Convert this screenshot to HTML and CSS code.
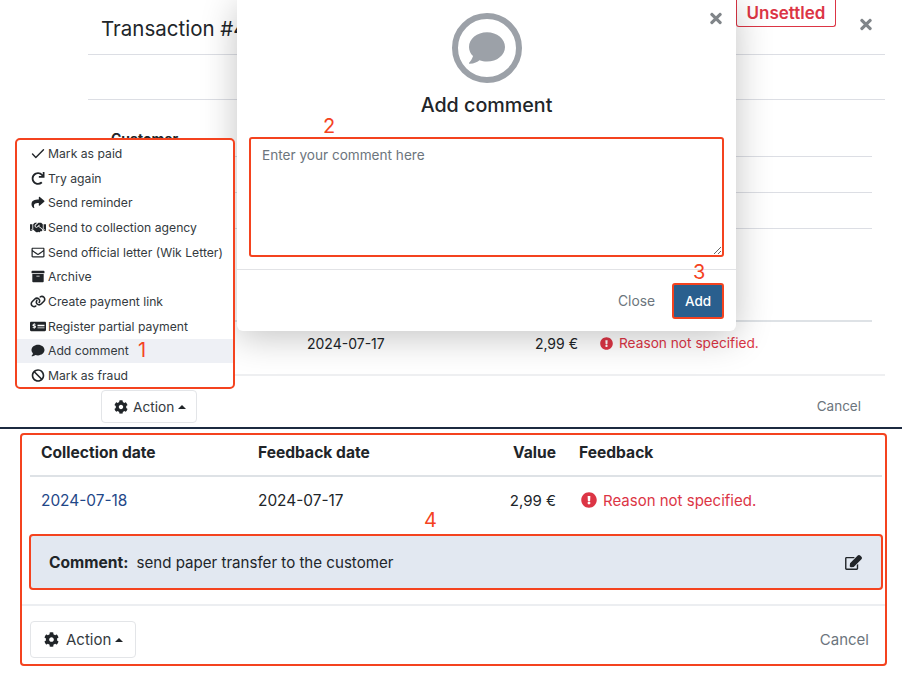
FILE: index.html
```html
<!DOCTYPE html>
<html lang="en">
<head>
<meta charset="utf-8">
<title>Add comment</title>
<link rel="stylesheet" href="styles.css">
</head>
<body>
<svg class="defs" width="0" height="0" aria-hidden="true">
  <symbol id="i-check" viewBox="0 0 512 512"><path fill="none" stroke="currentColor" stroke-width="56" stroke-linecap="round" stroke-linejoin="round" d="M40 280l130 130L472 108"/></symbol>
  <symbol id="i-redo" viewBox="0 0 512 512"><path d="M500.33 0h-47.41a12 12 0 0 0-12 12.57l4 82.76A247.42 247.42 0 0 0 256 8C119.34 8 8.05 119.53 8 256.19 7.95 393.07 119 504 256 504a247.1 247.1 0 0 0 166.18-63.91 12 12 0 0 0 .48-17.43l-34-34a12 12 0 0 0-16.38-.55A176 176 0 1 1 402.1 157.8l-101.53-4.87a12 12 0 0 0-12.57 12v47.41a12 12 0 0 0 12 12h200.33a12 12 0 0 0 12-12V12a12 12 0 0 0-12-12z"/></symbol>
  <symbol id="i-share" viewBox="0 0 512 512"><path d="M503.691 189.836L327.687 37.851C312.281 24.546 288 35.347 288 56.015v80.053C127.371 137.907 0 170.1 0 322.326c0 61.441 39.581 122.309 83.333 154.132 13.653 9.931 33.111-2.533 28.077-18.631C66.066 312.814 132.917 274.316 288 272.085V360c0 20.7 24.3 31.453 39.687 18.164l176.004-152c11.071-9.562 11.086-26.753 0-36.328z"/></symbol>
  <symbol id="i-handshake" viewBox="0 0 640 512"><path d="M434.7 64h-85.9c-8 0-15.7 3-21.6 8.4l-98.3 90c-.1.1-.2.3-.3.4-16.6 15.6-16.3 40.5-2.1 56 12.7 13.9 39.4 17.6 56.1 2.7.1-.1.3-.1.4-.2l79.9-73.2c6.5-5.9 16.7-5.5 22.6 1 6 6.5 5.5 16.6-1 22.6l-26.1 23.9L504 313.8c2.9 2.4 5.5 5 7.9 7.7V128l-54.6-54.6c-5.9-6-14.1-9.4-22.6-9.4zM544 128.2v223.9c0 17.7 14.3 32 32 32h64V128.2h-96zm48 223.9c-8.8 0-16-7.2-16-16s7.2-16 16-16 16 7.2 16 16-7.2 16-16 16zM0 384h64c17.7 0 32-14.3 32-32V128.2H0V384zm48-63.9c8.8 0 16 7.2 16 16s-7.2 16-16 16-16-7.2-16-16c0-8.9 7.2-16 16-16zm435.9 18.6L334.6 217.5l-30 27.5c-29.7 27.1-75.2 24.5-101.7-4.4-26.9-29.4-24.8-74.9 4.4-101.7L289.1 64h-83.8c-8.5 0-16.6 3.4-22.6 9.4L128 128v223.9h18.3l90.5 81.9c27.4 22.3 67.7 18.1 90-9.3l.2-.2 17.9 15.5c15.9 13 39.4 10.5 52.3-5.4l31.4-38.6 5.4 4.4c13.7 11.1 33.9 9.1 45-4.7l9.5-11.7c11.2-13.8 9.1-33.9-4.6-45.1z"/></symbol>
  <symbol id="i-envelope" viewBox="0 0 512 512"><path d="M464 64H48C21.49 64 0 85.49 0 112v288c0 26.51 21.49 48 48 48h416c26.51 0 48-21.49 48-48V112c0-26.51-21.49-48-48-48zm0 48v40.805c-22.422 18.259-58.168 46.651-134.587 106.49-16.841 13.247-50.201 45.072-73.413 44.701-23.208.375-56.579-31.459-73.413-44.701C106.18 199.465 70.425 171.067 48 152.805V112h416zM48 400V214.398c22.914 18.251 55.409 43.862 104.938 82.646 21.857 17.205 60.134 55.186 103.062 54.955 42.717.231 80.509-37.199 103.053-54.947 49.528-38.783 82.032-64.401 104.947-82.653V400H48z"/></symbol>
  <symbol id="i-archive" viewBox="0 0 512 512"><path d="M32 448c0 17.7 14.3 32 32 32h384c17.7 0 32-14.3 32-32V160H32v288zm160-212c0-6.6 5.4-12 12-12h104c6.6 0 12 5.4 12 12v8c0 6.6-5.4 12-12 12H204c-6.6 0-12-5.4-12-12v-8zM480 32H32C14.3 32 0 46.3 0 64v48c0 8.8 7.2 16 16 16h480c8.8 0 16-7.2 16-16V64c0-17.7-14.3-32-32-32z"/></symbol>
  <symbol id="i-link" viewBox="0 0 640 512"><path d="M579.8 267.7c56.5-56.5 56.5-148 0-204.5c-50-50-128.8-56.5-186.3-15.4l-1.6 1.1c-14.4 10.3-17.7 30.3-7.4 44.6s30.3 17.7 44.6 7.4l1.6-1.1c32.1-22.9 76-19.3 103.8 8.6c31.5 31.5 31.5 82.5 0 114L422.3 334.8c-31.5 31.5-82.5 31.5-114 0c-27.9-27.9-31.5-71.8-8.6-103.8l1.1-1.6c10.3-14.4 6.9-34.4-7.4-44.6s-34.4-6.9-44.6 7.4l-1.1 1.6C206.5 251.2 213 330 263 380c56.5 56.5 148 56.5 204.5 0L579.8 267.7zM60.2 244.3c-56.5 56.5-56.5 148 0 204.5c50 50 128.8 56.5 186.3 15.4l1.6-1.1c14.4-10.3 17.7-30.3 7.4-44.6s-30.3-17.7-44.6-7.4l-1.6 1.1c-32.1 22.9-76 19.3-103.8-8.6C74 372 74 321 105.5 289.5L217.7 177.2c31.5-31.5 82.5-31.5 114 0c27.9 27.9 31.5 71.8 8.6 103.9l-1.1 1.6c-10.3 14.4-6.9 34.4 7.4 44.6s34.4 6.9 44.6-7.4l1.1-1.6C433.5 260.8 427 182 377 132c-56.5-56.5-148-56.5-204.5 0L60.2 244.3z"/></symbol>
  <symbol id="i-money" viewBox="0 0 640 512"><path fill-rule="evenodd" d="M48 64h544c26.5 0 48 21.500 48 48v288c0 26.500-21.500 48-48 48H48c-26.500 0-48-21.500-48-48V112c0-26.500 21.500-48 48-48zM300 192v48c0 4 4 8 8 8h264c4 0 8-4 8-8v-48c0-4-4-8-8-8H308c-4 0-8 4-8 8zm0 112v16c0 4 4 8 8 8h264c4 0 8-4 8-8v-16c0-4-4-8-8-8H308c-4 0-8 4-8 8zM150 130v22c-30 4-52 26-52 52 0 28 20 42 50 50 22 6 30 10 30 18 0 8-8 12-22 12-12 0-28-4-40-10l-14 34c12 6 30 10 48 12v22h36v-24c30-6 50-26 50-54 0-30-20-44-52-54-20-6-28-10-28-16s6-10 18-10 26 4 34 8l14-34c-10-4-24-8-36-8v-20z"/></symbol>
  <symbol id="i-comment" viewBox="0 0 512 512"><path d="M256 32C114.6 32 0 125.1 0 240c0 49.6 21.4 95 57 130.7C44.5 421.1 2.7 466 2.2 466.5c-2.2 2.3-2.8 5.7-1.5 8.7S4.8 480 8 480c66.3 0 116-31.8 140.6-51.4 32.7 12.3 69 19.4 107.4 19.4 141.4 0 256-93.1 256-208S397.4 32 256 32z"/></symbol>
  <symbol id="i-ban" viewBox="0 0 512 512"><path d="M256 8C119.034 8 8 119.033 8 256s111.034 248 248 248 248-111.034 248-248S392.967 8 256 8zm130.108 117.892c65.448 65.448 70 165.481 20.677 235.637L150.47 105.216c70.204-49.356 170.226-44.735 235.638 20.676zM125.892 386.108c-65.448-65.448-70-165.481-20.677-235.637L361.53 406.784c-70.203 49.356-170.226 44.736-235.638-20.676z"/></symbol>
  <symbol id="i-cog" viewBox="0 0 512 512"><path d="M487.4 315.7l-42.6-24.6c4.3-23.2 4.3-47 0-70.2l42.6-24.6c4.9-2.8 7.1-8.6 5.5-14-11.1-35.6-30-67.8-54.7-94.6-3.8-4.1-10-5.1-14.8-2.3L380.8 110c-17.9-15.4-38.5-27.3-60.8-35.1V25.8c0-5.6-3.9-10.5-9.4-11.7-36.7-8.2-74.3-7.8-109.2 0-5.5 1.2-9.4 6.1-9.4 11.7V75c-22.2 7.9-42.8 19.8-60.8 35.1L88.7 85.5c-4.9-2.8-11-1.9-14.8 2.3-24.7 26.7-43.6 58.9-54.7 94.6-1.7 5.4.6 11.2 5.5 14L67.3 221c-4.3 23.2-4.3 47 0 70.2l-42.6 24.6c-4.9 2.8-7.1 8.6-5.5 14 11.1 35.6 30 67.8 54.7 94.6 3.8 4.1 10 5.1 14.8 2.3l42.6-24.6c17.9 15.4 38.5 27.3 60.8 35.1v49.2c0 5.6 3.9 10.5 9.4 11.7 36.7 8.2 74.3 7.8 109.2 0 5.5-1.2 9.4-6.1 9.4-11.7v-49.2c22.2-7.9 42.8-19.8 60.8-35.1l42.6 24.6c4.9 2.8 11 1.9 14.8-2.3 24.7-26.7 43.6-58.9 54.7-94.6 1.5-5.5-.7-11.3-5.6-14.1zM256 336c-44.1 0-80-35.9-80-80s35.9-80 80-80 80 35.9 80 80-35.9 80-80 80z"/></symbol>
  <symbol id="i-alert" viewBox="0 0 512 512"><path d="M504 256c0 136.997-111.043 248-248 248S8 392.997 8 256C8 119.083 119.043 8 256 8s248 111.083 248 248zm-248 50c-25.405 0-46 20.595-46 46s20.595 46 46 46 46-20.595 46-46-20.595-46-46-46zm-43.673-165.346l7.418 136c.347 6.364 5.609 11.346 11.982 11.346h48.546c6.373 0 11.635-4.982 11.982-11.346l7.418-136c.375-6.874-5.098-12.654-11.982-12.654h-63.383c-6.884 0-12.356 5.78-11.981 12.654z"/></symbol>
  <symbol id="i-edit" viewBox="0 0 576 512"><path d="M402.3 344.9l32-32c5-5 13.7-1.500 13.700 5.700V464c0 26.500-21.500 48-48 48H48c-26.500 0-48-21.500-48-48V112c0-26.500 21.500-48 48-48h273.500c7.100 0 10.700 8.600 5.700 13.700l-32 32c-1.500 1.500-3.500 2.300-5.700 2.300H48v352h352V350.500c0-2.100.8-4.100 2.300-5.600zm156.600-201.800L296.300 405.700l-90.400 10c-26.200 2.900-48.500-19.200-45.600-45.600l10-90.400L432.900 17.100c22.900-22.900 59.900-22.900 82.700 0l43.200 43.200c22.900 22.900 22.900 60 .1 82.800z"/></symbol>
  <symbol id="i-times" viewBox="0 0 352 512"><path d="M242.72 256l100.07-100.07c12.28-12.28 12.28-32.19 0-44.48l-22.24-22.24c-12.28-12.28-32.19-12.28-44.48 0L176 189.28 75.93 89.21c-12.28-12.28-32.19-12.28-44.48 0L9.21 111.45c-12.28 12.28-12.28 32.19 0 44.48L109.28 256 9.21 356.07c-12.28 12.28-12.28 32.19 0 44.48l22.24 22.24c12.28 12.28 32.2 12.28 44.48 0L176 322.72l100.07 100.07c12.28 12.28 32.2 12.28 44.48 0l22.24-22.24c12.28-12.28 12.28-32.19 0-44.48L242.72 256z"/></symbol>
</svg>

<section class="shot-top">
  <div class="panel">
    <header class="panel-head">
      <h1 class="panel-title">Transaction #4</h1>
      <span class="badge">Unsettled</span>
      <svg class="ico-close panel-close"><use href="#i-times"/></svg>
    </header>
    <div class="panel-strip"></div>
    <div class="details">
      <div class="detail-row detail-first"><strong>Customer</strong></div>
      <div class="detail-row"></div>
      <div class="detail-row"></div>
      <div class="detail-gap"></div>
      <div class="attempt-row">
        <span class="attempt-date">2024-07-17</span>
        <span class="attempt-value">2,99 €</span>
        <span class="feedback"><svg class="ico-alert"><use href="#i-alert"/></svg>Reason not specified.</span>
      </div>
    </div>
    <footer class="panel-foot">
      <button class="btn-action" type="button"><svg class="ico-cog"><use href="#i-cog"/></svg>Action<span class="caret"></span></button>
      <span class="cancel">Cancel</span>
    </footer>
  </div>

  <ul class="menu">
    <li class="menu-item"><svg class="ico"><use href="#i-check"/></svg>Mark as paid</li>
    <li class="menu-item"><svg class="ico"><use href="#i-redo"/></svg>Try again</li>
    <li class="menu-item"><svg class="ico"><use href="#i-share"/></svg>Send reminder</li>
    <li class="menu-item"><svg class="ico"><use href="#i-handshake"/></svg>Send to collection agency</li>
    <li class="menu-item"><svg class="ico"><use href="#i-envelope"/></svg>Send official letter (Wik Letter)</li>
    <li class="menu-item"><svg class="ico"><use href="#i-archive"/></svg>Archive</li>
    <li class="menu-item"><svg class="ico"><use href="#i-link"/></svg>Create payment link</li>
    <li class="menu-item"><svg class="ico"><use href="#i-money"/></svg>Register partial payment</li>
    <li class="menu-item menu-active"><svg class="ico"><use href="#i-comment"/></svg>Add comment</li>
    <li class="menu-item"><svg class="ico"><use href="#i-ban"/></svg>Mark as fraud</li>
  </ul>

  <div class="modal">
    <svg class="ico-close modal-close"><use href="#i-times"/></svg>
    <div class="modal-body">
      <div class="modal-icon"><svg class="ico-bubble"><use href="#i-comment"/></svg></div>
      <h2 class="modal-title">Add comment</h2>
      <textarea class="modal-input" placeholder="Enter your comment here"></textarea>
    </div>
    <div class="modal-foot">
      <span class="modal-cancel">Close</span>
      <button class="btn-add" type="button">Add</button>
    </div>
  </div>

  <span class="mark mark-1">1</span>
  <span class="mark mark-2">2</span>
  <span class="mark mark-3">3</span>
</section>

<div class="rule"></div>

<section class="result">
  <div class="result-table">
    <div class="result-row result-head">
      <span>Collection date</span>
      <span>Feedback date</span>
      <span class="num">Value</span>
      <span>Feedback</span>
    </div>
    <div class="result-row">
      <a class="date-link">2024-07-18</a>
      <span class="date-cell">2024-07-17</span>
      <span class="num">2,99 €</span>
      <span class="feedback feedback-lg"><svg class="ico-alert-lg"><use href="#i-alert"/></svg>Reason not specified.</span>
    </div>
  </div>
  <div class="comment">
    <strong class="comment-label">Comment:</strong>
    <span class="comment-text">send paper transfer to the customer</span>
    <svg class="ico-edit"><use href="#i-edit"/></svg>
  </div>
  <footer class="result-foot">
    <button class="btn-action btn-action-lg" type="button"><svg class="ico-cog ico-cog-lg"><use href="#i-cog"/></svg>Action<span class="caret"></span></button>
    <span class="cancel cancel-lg">Cancel</span>
  </footer>
  <span class="mark mark-4">4</span>
</section>
</body>
</html>
```

FILE: styles.css
```css
* { box-sizing: border-box; }

html, body { margin: 0; padding: 0; }

body {
  width: 902px;
  height: 678px;
  overflow: hidden;
  background: #fff;
  color: #212529;
  font-family: Inter, "Liberation Sans", sans-serif;
}

.defs { position: absolute; }

svg { fill: currentColor; display: block; flex: none; }

/* ---------- upper screenshot ---------- */
.shot-top {
  position: relative;
  height: 427px;
  overflow: hidden;
}

.panel {
  width: 797px;
  margin-left: 88px;
}

.panel-head {
  height: 55px;
  display: flex;
  align-items: flex-start;
  padding-left: 13px;
  border-bottom: 1px solid #dcdee4;
}

.panel-title {
  margin: 16px 0 0;
  font-size: 20.500px;
  line-height: 26px;
  font-weight: 400;
  width: 635px;
  white-space: nowrap;
  overflow: hidden;
}

.badge {
  width: 100px;
  height: 27px;
  border: 1px solid #dc3545;
  border-top: 0;
  border-radius: 0 0 3px 3px;
  color: #dc3545;
  font-weight: 600;
  font-size: 17px;
  line-height: 26px;
  text-align: center;
}

.ico-close { width: 12px; height: 17px; color: #808589; }

.panel-close { margin: 16px 0 0 24px; }

.panel-strip {
  height: 45px;
  border-bottom: 1px solid #dcdee4;
}

.details {
  margin: 0 13px;
  height: 274px;
  display: flex;
  flex-direction: column;
}

.detail-row {
  height: 36px;
  border-bottom: 1px solid #dcdee4;
  padding-left: 10px;
  font-size: 14px;
}

.detail-first {
  height: 57px;
  padding-top: 30px;
  line-height: 17px;
}

.detail-gap {
  height: 93px;
  border-bottom: 2px solid #dee2e6;
}

.attempt-row {
  flex: 1;
  display: grid;
  grid-template-columns: 412px 65px 1fr;
  align-items: center;
  padding-bottom: 10px;
  font-size: 14px;
}

.attempt-date { padding-left: 206px; white-space: nowrap; }

.attempt-value { text-align: right; }

.feedback {
  display: flex;
  align-items: center;
  gap: 6px;
  color: #dc3545;
  padding-left: 22px;
  font-size: 13.700px;
  white-space: nowrap;
}

.ico-alert { width: 13px; height: 13px; }

.panel-foot {
  height: 53px;
  border-top: 2px solid #eeeff1;
  display: flex;
  align-items: flex-start;
  justify-content: space-between;
  padding: 14px 24px 0 13px;
}

.btn-action {
  display: flex;
  align-items: center;
  width: 96px;
  height: 33px;
  padding: 0 0 0 12px;
  background: #fff;
  border: 1px solid #e3e5e8;
  border-radius: 4px;
  color: #343a40;
  font: 400 13.700px Inter, "Liberation Sans", sans-serif;
}

.ico-cog { width: 14px; height: 14px; margin-right: 5px; color: #212529; }

.caret {
  margin-left: 4px;
  border-left: 4px solid transparent;
  border-right: 4px solid transparent;
  border-bottom: 4px solid #212529;
}

.cancel {
  margin-top: 8px;
  font-size: 13.500px;
  line-height: 17px;
  color: #6c757d;
}

/* ---------- action menu ---------- */
.menu {
  position: absolute;
  left: 15px;
  top: 138px;
  width: 220px;
  height: 251px;
  margin: 0;
  padding: 1px 0 0;
  list-style: none;
  background: #fff;
  border: 2px solid #f4431f;
  border-radius: 5px;
  z-index: 3;
}

.menu-item {
  height: 24.700px;
  display: flex;
  align-items: center;
  padding-left: 13px;
  font-size: 12.200px;
  color: #343a40;
  white-space: nowrap;
}

.menu-active { background: #eef0f5; }

.ico {
  width: 16px;
  height: 13px;
  margin-right: 2px;
  color: #212529;
}

/* ---------- modal ---------- */
.modal {
  position: absolute;
  left: 237px;
  top: 0;
  width: 499px;
  height: 331px;
  background: #fff;
  border-radius: 0 0 6px 6px;
  box-shadow: 0 6px 36px rgba(0, 0, 0, .24);
  z-index: 2;
}

.modal-close {
  position: absolute;
  right: 14px;
  top: 10px;
}

.modal-body {
  height: 270px;
  padding: 13px 12px 0;
  border-bottom: 1px solid #e2e3e6;
  display: flex;
  flex-direction: column;
  align-items: center;
}

.modal-icon {
  width: 70px;
  height: 70px;
  border: 6px solid #9ca1a8;
  border-radius: 50%;
  display: flex;
  align-items: center;
  justify-content: center;
  color: #9ca1a8;
}

.ico-bubble { width: 36px; height: 36px; }

.modal-title {
  margin: 9px 0 0;
  font-size: 19.700px;
  line-height: 26px;
  font-weight: 500;
}

.modal-input {
  width: 475px;
  height: 120px;
  margin-top: 19px;
  padding: 6px 11px;
  border: 2px solid #f4431f;
  border-radius: 3px;
  background: #fff;
  font: 400 13.600px/20px Inter, "Liberation Sans", sans-serif;
  outline: none;
}

.modal-input::placeholder { color: #6c757d; opacity: 1; }

.modal-foot {
  display: flex;
  align-items: center;
  justify-content: flex-end;
  padding: 13px 12px 0 0;
  gap: 17px;
}

.modal-cancel { font-size: 13.800px; color: #6c757d; }

.btn-add {
  width: 52px;
  height: 36px;
  border: 2px solid #f4431f;
  border-radius: 3px;
  background: #2a5f8e;
  color: #fff;
  font: 500 13.500px Inter, "Liberation Sans", sans-serif;
}

/* ---------- callout numbers ---------- */
.mark {
  position: absolute;
  color: #f4431f;
  font-size: 20px;
  line-height: 24px;
  z-index: 4;
}

.mark-1 { left: 138px; top: 338px; }
.mark-2 { left: 323px; top: 114px; }
.mark-3 { left: 693px; top: 260px; }
.mark-4 { left: 402px; top: 73px; }

/* ---------- divider ---------- */
.rule { height: 2px; background: #1c2a40; }

/* ---------- lower screenshot ---------- */
.result {
  position: relative;
  width: 867px;
  height: 233px;
  margin: 4px 0 0 20px;
  border: 2px solid #f4431f;
  border-radius: 4px;
  font-size: 15px;
}

.result-table { margin: 0 3px 0 8px; }

.result-row {
  display: grid;
  grid-template-columns: 217px 203px 117px 1fr;
  align-items: center;
  height: 46px;
}

.result-row > * { padding: 0 11px; }

.result-head {
  height: 42px;
  padding-bottom: 6px;
  border-bottom: 2px solid #dee2e6;
  font-weight: 700;
  font-size: 15.600px;
}

.result-head > :last-child { padding-left: 12px; }

.num { text-align: right; }

.date-link { color: #1f4788; font-size: 15.400px; }

.date-cell { font-size: 15.400px; }

.feedback-lg { padding-left: 14px; gap: 6px; font-size: 15px; }

.ico-alert-lg { width: 16px; height: 16px; }

.comment {
  display: flex;
  align-items: center;
  height: 56px;
  margin: 11px 2px 0 7px;
  padding: 0 19px 0 18px;
  background: #e2e8f1;
  border: 2px solid #f4431f;
  border-radius: 4px;
}

.comment-label { font-weight: 700; font-size: 15.600px; margin-right: 8px; }

.comment-text { flex: 1; font-size: 15.100px; }

.ico-edit { width: 17px; height: 15px; color: #212529; }

.result-foot {
  display: flex;
  align-items: flex-start;
  justify-content: space-between;
  height: 55px;
  margin-top: 14px;
  padding: 15px 16px 0 8px;
  border-top: 2px solid #eceef1;
}

.btn-action-lg {
  width: 106px;
  height: 37px;
  padding-left: 13px;
  font-size: 15px;
}

.ico-cog-lg { width: 15px; height: 15px; margin-right: 7px; }

.cancel-lg { font-size: 15px; margin-top: 10px; }
```
